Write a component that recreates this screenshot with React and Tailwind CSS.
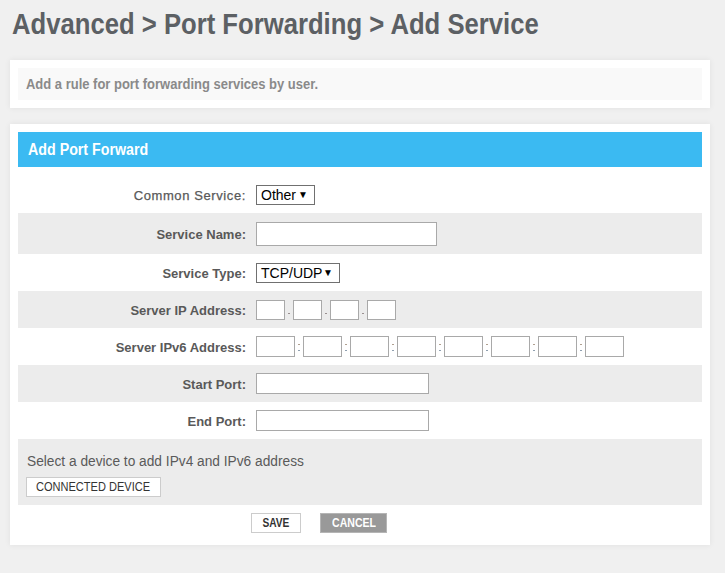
import React from "react";

const sans = { fontFamily: '"Liberation Sans", Arial, sans-serif' };

function Row({ label, gray, h = "h-[37px]", light, children }) {
  return (
    <div className={`flex items-center ${h} ${gray ? "bg-[#ececec]" : "bg-white"}`}>
      <div
        className={`w-[228px] text-right text-[13px] text-[#595959] pt-[2px] ${
          light ? "font-normal tracking-[0.6px] [-webkit-text-stroke:0.25px_#595959]" : "font-bold"
        }`}
        style={sans}
      >
        {label}
      </div>
      <div className="ml-[10px] flex items-center">{children}</div>
    </div>
  );
}

function Select({ value, w }) {
  return (
    <div
      className={`${w} h-[20px] border border-[#707070] bg-white flex items-center justify-between pl-[4px] pr-[6px] text-[14px] text-black`}
      style={sans}
    >
      <span className="leading-none">{value}</span>
      <span className="text-[10px] leading-none">▼</span>
    </div>
  );
}

function Box({ w, h = "h-[21px]" }) {
  return <div className={`${w} ${h} border border-[#a9a9a9] bg-white`} />;
}

export default function App() {
  return (
    <div className="min-h-[573px] w-full bg-[#f0f0f0] pb-[27px]" style={sans}>
      <h1 className="pl-[12px] pt-[8px] text-[29px] leading-[33px] font-bold text-[#5c6064] whitespace-nowrap">
        <span className="inline-block origin-left scale-x-[0.885]">
          Advanced &gt; Port Forwarding &gt; Add Service
        </span>
      </h1>

      <div className="mx-[10px] mt-[19px] bg-white p-[8px] shadow-[0_0_6px_rgba(0,0,0,0.07)] w-[700px]">
        <div className="h-[32px] bg-[#f9f9f9] flex items-center pl-[8px] text-[14px] font-bold text-[#8a8a8a] whitespace-nowrap">
          <span className="inline-block origin-left scale-x-[0.927]">
            Add a rule for port forwarding services by user.
          </span>
        </div>
      </div>

      <div className="mx-[10px] mt-[16px] bg-white px-[8px] pt-[8px] shadow-[0_0_6px_rgba(0,0,0,0.07)] w-[700px]">
        <div className="h-[35px] bg-[#3bbaf2] flex items-center pl-[10px] text-[16px] font-bold text-white whitespace-nowrap">
          <span className="inline-block origin-left scale-x-[0.89]">Add Port Forward</span>
        </div>
        <div className="h-[9px]" />
        <Row label="Common Service:" light>
          <Select value="Other" w="w-[59px]" />
        </Row>
        <Row label="Service Name:" gray h="h-[41px]">
          <Box w="w-[181px]" h="h-[24px]" />
        </Row>
        <Row label="Service Type:">
          <Select value="TCP/UDP" w="w-[84px]" />
        </Row>
        <Row label="Server IP Address:" gray>
          <div className="flex items-stretch">
            {[0, 1, 2, 3].map((i) => (
              <React.Fragment key={i}>
                {i > 0 && (
                  <span className="w-[8px] flex justify-center items-end pb-[6px]">
                    <span className="block w-[2px] h-[1px] bg-[#9a9090]" />
                  </span>
                )}
                <Box w="w-[29px]" h="h-[20px]" />
              </React.Fragment>
            ))}
          </div>
        </Row>
        <Row label="Server IPv6 Address:">
          <div className="flex items-center">
            {[0, 1, 2, 3, 4, 5, 6, 7].map((i) => (
              <React.Fragment key={i}>
                {i > 0 && (
                  <span className="w-[8px] flex flex-col items-center gap-[5px] pt-[2px]">
                    <span className="block w-[2px] h-[1px] bg-[#b0a090]" />
                    <span className="block w-[2px] h-[1px] bg-[#90a0b0]" />
                  </span>
                )}
                <Box w="w-[39px]" />
              </React.Fragment>
            ))}
          </div>
        </Row>
        <Row label="Start Port:" gray>
          <Box w="w-[173px]" />
        </Row>
        <Row label="End Port:">
          <Box w="w-[173px]" />
        </Row>
        <div className="h-[66px] bg-[#ececec] pl-[8px] pt-[14px]">
          <div className="pl-[1px] text-[14px] leading-[17px] text-[#5a5a5a] whitespace-nowrap">
            <span className="inline-block origin-left scale-x-[0.98]">
              Select a device to add IPv4 and IPv6 address
            </span>
          </div>
          <div className="mt-[7px] w-[135px] h-[20px] border border-[#cccccc] bg-white flex items-center justify-center text-[12px] text-[#333] whitespace-nowrap">
            <span className="inline-block scale-x-[0.92]">CONNECTED DEVICE</span>
          </div>
        </div>
        <div className="h-[40px] flex items-start pt-[8px] pl-[233px] gap-[19px]">
          <div className="w-[50px] h-[20px] border border-[#cccccc] bg-white flex items-center justify-center text-[12px] font-bold text-[#333]">
            <span className="inline-block scale-x-[0.85]">SAVE</span>
          </div>
          <div className="w-[67px] h-[20px] border border-[#b5b5b5] bg-[#999999] flex items-center justify-center text-[12px] font-bold text-white">
            <span className="inline-block scale-x-[0.88]">CANCEL</span>
          </div>
        </div>
      </div>
    </div>
  );
}
